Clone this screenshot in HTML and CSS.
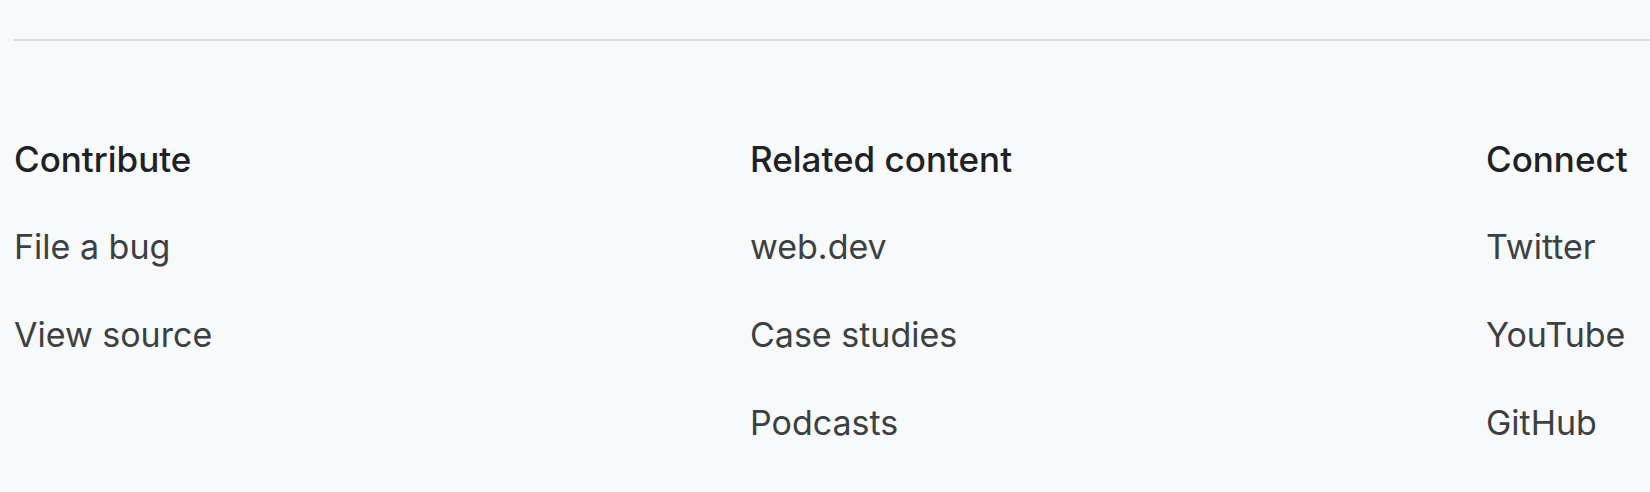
FILE: index.html
```html
<!DOCTYPE html>
<html lang="en">
<head>
<meta charset="utf-8">
<title>Footer</title>
<link rel="stylesheet" href="styles.css">
</head>
<body>
<footer class="footer">
  <div class="footer-inner">
    <div class="col">
      <h3 class="col-title">Contribute</h3>
      <ul class="links">
        <li><a href="#">File a bug</a></li>
        <li><a href="#">View source</a></li>
      </ul>
    </div>
    <div class="col">
      <h3 class="col-title">Related content</h3>
      <ul class="links">
        <li><a href="#">web.dev</a></li>
        <li><a href="#">Case studies</a></li>
        <li><a href="#">Podcasts</a></li>
      </ul>
    </div>
    <div class="col">
      <h3 class="col-title">Connect</h3>
      <ul class="links">
        <li><a href="#">Twitter</a></li>
        <li><a href="#">YouTube</a></li>
        <li><a href="#">GitHub</a></li>
      </ul>
    </div>
  </div>
</footer>
</body>
</html>
```
FILE: styles.css
```css
html, body {
  margin: 0;
  padding: 0;
  background: #f8f9fa;
}
body {
  font-family: "Inter", "Noto Sans", sans-serif;
  color: #3c4043;
  overflow: hidden;
}
.footer {
  padding: 39px 0 0 14px;
}
.footer-inner {
  border-top: 2px solid #dadce0;
  display: grid;
  grid-template-columns: 736px 736px 1fr;
  padding-top: 96px;
}
.col {
  display: flex;
  flex-direction: column;
}
.col-title {
  margin: 0;
  font-size: 35px;
  font-weight: 500;
  line-height: 44px;
  color: #202124;
}
.links {
  list-style: none;
  margin: 0;
  padding: 0;
}
.links li {
  margin-top: 44px;
  font-size: 34px;
  line-height: 44px;
}
.links a {
  font-weight: 400;
  color: #3c4043;
  text-decoration: none;
}
```
